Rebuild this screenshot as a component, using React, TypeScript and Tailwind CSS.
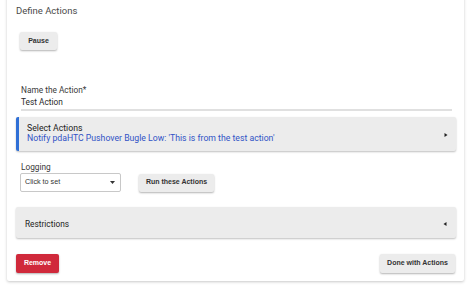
export default function App() {
  return (
    <div className="h-[292px] w-full overflow-hidden bg-white font-['Roboto',sans-serif]">
      {/* Card */}
      <div className="ml-[7px] mt-[-4px] w-[457px] rounded-b-[2px] bg-white pb-[8px] pl-[9px] pr-[8px] pt-[9px] shadow-[0_1px_3px_rgba(0,0,0,0.22)]">
        <div className="text-[9.5px] leading-[12px] text-[#4a4a4a]">Define Actions</div>

        <div className="mt-[15px] flex pl-[4px]">
          <button className="h-[18px] w-[37px] rounded-[2px] bg-[#ececec] font-['Liberation_Sans',sans-serif] text-[7px] font-bold text-[#333] shadow-[0_1px_2px_rgba(0,0,0,0.3)]">
            Pause
          </button>
        </div>

        {/* Name field */}
        <div className="mt-[35px] pl-[5px] pr-[4px]">
          <div className="text-[8.3px] leading-[10px] text-[#3a3a3a]">Name the Action*</div>
          <div className="mt-[2px] border-b-2 border-[#e0e0e0] pb-[2px] text-[8.3px] leading-[10px] text-[#2a2a2a]">
            Test Action
          </div>
        </div>

        {/* Select Actions panel */}
        <div className="mt-[6px] flex h-[34px] items-start justify-between rounded-[2px] border-l-[3px] border-[#2f6fd6] bg-[#ececec] pl-[8px] pr-[8px] pt-[7px] shadow-[0_1px_2px_rgba(0,0,0,0.25)]">
          <div>
            <div className="text-[8.7px] leading-[9.5px] text-[#222]">Select Actions</div>
            <div className="text-[8.7px] leading-[9.5px] text-[#3153c6]">
              Notify pdaHTC Pushover Bugle Low: 'This is from the test action'
            </div>
          </div>
          <svg className="mt-[9px]" width="4" height="4" viewBox="0 0 4 4">
            <path d="M0.5 0L3.5 2L0.5 4z" fill="#222" />
          </svg>
        </div>

        {/* Logging + run */}
        <div className="mt-[11px] pl-[5px]">
          <div className="text-[8.3px] leading-[10px] text-[#3a3a3a]">Logging</div>
          <div className="ml-[-1px] mt-[1px] flex items-center">
            <div className="flex h-[19px] w-[101px] items-center justify-between rounded-[2px] border border-[#c8c8c8] bg-white pl-[4px] pr-[5px]">
              <span className="font-['Liberation_Sans',sans-serif] text-[7.2px] text-[#333]">Click to set</span>
              <svg width="5" height="3" viewBox="0 0 5 3">
                <path d="M0 0h5L2.5 3z" fill="#333" />
              </svg>
            </div>
            <button className="ml-[18px] h-[18px] w-[75px] rounded-[2px] bg-[#ececec] font-['Liberation_Sans',sans-serif] text-[7px] font-bold text-[#333] shadow-[0_1px_2px_rgba(0,0,0,0.3)]">
              Run these Actions
            </button>
          </div>
        </div>

        {/* Restrictions panel */}
        <div className="mt-[15px] flex h-[31px] items-start justify-between rounded-[2px] bg-[#ececec] pl-[9px] pr-[9px] pt-[12px] shadow-[0_1px_2px_rgba(0,0,0,0.25)]">
          <span className="text-[8.3px] leading-[10px] text-[#222]">Restrictions</span>
          <svg className="mt-[3px]" width="4" height="4" viewBox="0 0 4 4">
            <path d="M3.5 0L0.5 2L3.5 4z" fill="#222" />
          </svg>
        </div>

        {/* Footer buttons */}
        <div className="mt-[16px] flex items-center justify-between">
          <button className="h-[19px] w-[43px] rounded-[2px] bg-[#d0293b] font-['Liberation_Sans',sans-serif] text-[7px] font-bold text-white shadow-[0_1px_2px_rgba(0,0,0,0.3)]">
            Remove
          </button>
          <button className="mr-[1px] h-[19px] w-[75px] rounded-[2px] bg-[#ececec] font-['Liberation_Sans',sans-serif] text-[7px] font-bold text-[#333] shadow-[0_1px_2px_rgba(0,0,0,0.3)]">
            Done with Actions
          </button>
        </div>
      </div>
    </div>
  );
}
